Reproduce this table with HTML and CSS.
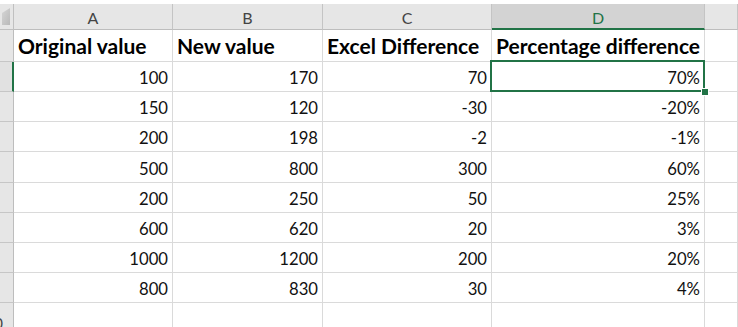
FILE: index.html
```html
<!DOCTYPE html>
<html lang="en">
<head>
<meta charset="utf-8">
<title>Percentage difference</title>
<link rel="stylesheet" href="styles.css">
</head>
<body>
<div class="page">
  <div class="sheet">
    <!-- column header row -->
    <div class="corner">
      <svg class="select-all" width="13" height="25" viewBox="0 0 13 25">
        <defs>
          <linearGradient id="tri" x1="0" y1="0" x2="1" y2="1">
            <stop offset="0" stop-color="#d6d6d6"/>
            <stop offset="1" stop-color="#b9b9b9"/>
          </linearGradient>
        </defs>
        <polygon points="2,9 10,4 10,21 2,21" fill="url(#tri)"/>
      </svg>
    </div>
    <div class="colhead">A</div>
    <div class="colhead">B</div>
    <div class="colhead">C</div>
    <div class="colhead active">D</div>
    <div class="colhead"></div>

    <!-- row 1 -->
    <div class="rowhead"></div>
    <div class="cell title">Original value</div>
    <div class="cell title">New value</div>
    <div class="cell title">Excel Difference</div>
    <div class="cell title">Percentage difference</div>
    <div class="cell"></div>

    <!-- row 2 -->
    <div class="rowhead selected"></div>
    <div class="cell num">100</div>
    <div class="cell num">170</div>
    <div class="cell num">70</div>
    <div class="cell num current">70%<span class="selection"></span><span class="handle"></span></div>
    <div class="cell"></div>

    <!-- row 3 -->
    <div class="rowhead"></div>
    <div class="cell num">150</div>
    <div class="cell num">120</div>
    <div class="cell num">-30</div>
    <div class="cell num">-20%</div>
    <div class="cell"></div>

    <!-- row 4 -->
    <div class="rowhead"></div>
    <div class="cell num">200</div>
    <div class="cell num">198</div>
    <div class="cell num">-2</div>
    <div class="cell num">-1%</div>
    <div class="cell"></div>

    <!-- row 5 -->
    <div class="rowhead"></div>
    <div class="cell num">500</div>
    <div class="cell num">800</div>
    <div class="cell num">300</div>
    <div class="cell num">60%</div>
    <div class="cell"></div>

    <!-- row 6 -->
    <div class="rowhead"></div>
    <div class="cell num">200</div>
    <div class="cell num">250</div>
    <div class="cell num">50</div>
    <div class="cell num">25%</div>
    <div class="cell"></div>

    <!-- row 7 -->
    <div class="rowhead"></div>
    <div class="cell num">600</div>
    <div class="cell num">620</div>
    <div class="cell num">20</div>
    <div class="cell num">3%</div>
    <div class="cell"></div>

    <!-- row 8 -->
    <div class="rowhead"></div>
    <div class="cell num">1000</div>
    <div class="cell num">1200</div>
    <div class="cell num">200</div>
    <div class="cell num">20%</div>
    <div class="cell"></div>

    <!-- row 9 -->
    <div class="rowhead"></div>
    <div class="cell num">800</div>
    <div class="cell num">830</div>
    <div class="cell num">30</div>
    <div class="cell num">4%</div>
    <div class="cell"></div>

    <!-- row 10 -->
    <div class="rowhead last"><span class="rownum">10</span></div>
    <div class="cell"></div>
    <div class="cell"></div>
    <div class="cell"></div>
    <div class="cell"></div>
    <div class="cell"></div>
  </div>
</div>
</body>
</html>
```

FILE: styles.css
```css
* {
  box-sizing: border-box;
}

html, body {
  margin: 0;
  padding: 0;
  background: #ffffff;
}

.page {
  width: 738px;
  height: 327px;
  overflow: hidden;
  padding-top: 4px;
  background: #ffffff;
}

.sheet {
  display: grid;
  grid-template-columns: 14px 159px 150px 169px 213px 1fr;
  grid-template-rows: 26px 32px 30px 30px 30px 31px 30px 30px 30px 30px 30px;
  font-family: Lato, "Open Sans", sans-serif;
  color: #000000;
}

/* headers */
.corner {
  background: #e6e6e6;
  border-right: 1px solid #c0c0c0;
  border-bottom: 1px solid #c0c0c0;
  overflow: hidden;
}

.select-all {
  display: block;
}

.colhead {
  background: #e6e6e6;
  border-right: 1px solid #c4c4c4;
  border-bottom: 1px solid #bdbdbd;
  display: flex;
  align-items: center;
  justify-content: center;
  font-size: 16px;
  color: #444444;
  padding-top: 1px;
}

.colhead.active {
  background: #d3d3d3;
  color: #217346;
  border-bottom: 2px solid #217346;
  padding-top: 2px;
}

.rowhead {
  background: #e6e6e6;
  border-right: 1px solid #bdbdbd;
  border-bottom: 1px solid #c6c6c6;
  overflow: hidden;
  display: flex;
  justify-content: flex-end;
  align-items: flex-end;
}

.rowhead.selected {
  border-right: 2px solid #217346;
  background: #e1e1e1;
}

.rowhead.last {
  padding-right: 10px;
  padding-bottom: 1px;
}

.rownum {
  font-size: 15px;
  color: #444444;
  line-height: 1;
}

/* body cells */
.cell {
  border-right: 1px solid #dadada;
  border-bottom: 1px solid #dadada;
  display: flex;
  align-items: flex-end;
  white-space: nowrap;
  padding-bottom: 4px;
  line-height: 1;
}

.cell.title {
  font-weight: 700;
  font-size: 21px;
  padding-left: 4px;
  padding-bottom: 5px;
  color: #000000;
}

.cell.num {
  justify-content: flex-end;
  font-size: 16.7px;
  padding-right: 4px;
  color: #111111;
}

.cell.current {
  position: relative;
}

.selection {
  position: absolute;
  top: -2px;
  left: -2px;
  right: -1px;
  bottom: -1px;
  border: 2px solid #217346;
  z-index: 2;
}

.handle {
  position: absolute;
  left: 209px;
  top: 26px;
  width: 8px;
  height: 8px;
  background: #217346;
  border: 1px solid #ffffff;
  z-index: 3;
}
```
